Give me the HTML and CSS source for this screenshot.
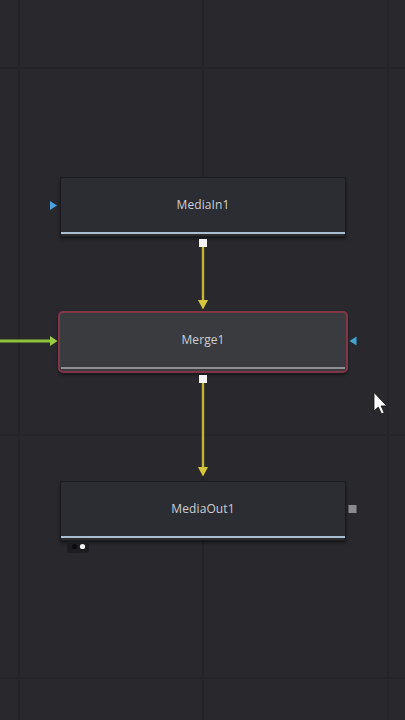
FILE: index.html
```html
<!DOCTYPE html>
<html>
<head>
<meta charset="utf-8">
<link rel="stylesheet" href="styles.css">
</head>
<body>
<div class="canvas">
  <div class="grid-v g1"></div>
  <div class="grid-v g2"></div>
  <div class="grid-v g3"></div>
  <div class="grid-h h1"></div>
  <div class="grid-h h2"></div>
  <div class="grid-h h3"></div>

  <div class="node node-in"><span class="label">MediaIn1</span></div>
  <div class="node node-merge"><span class="label">Merge1</span></div>
  <div class="node node-out"><span class="label">MediaOut1</span></div>

  <svg class="wires" width="405" height="720" viewBox="0 0 405 720">
    <!-- MediaIn1 input -->
    <polygon points="50,201 50,210 57,205.5" fill="#4aa3da"/>
    <!-- MediaIn1 output -> Merge -->
    <line x1="203" y1="247" x2="203" y2="301" stroke="#c4b535" stroke-width="2.4"/>
    <rect x="199" y="239" width="8" height="8" fill="#f4f4f4"/>
    <polygon points="198,300 208,300 203,309.5" fill="#d6c63c"/>
    <!-- green input to Merge -->
    <line x1="0" y1="341" x2="51" y2="341" stroke="#8cc43c" stroke-width="3"/>
    <polygon points="50,336 50,346 57.5,341" fill="#9ccc44"/>
    <!-- Merge right input -->
    <polygon points="356.5,336.5 356.5,345.5 349.5,341" fill="#42a3cf"/>
    <!-- Merge output -> MediaOut -->
    <line x1="203" y1="383" x2="203" y2="468" stroke="#c4b535" stroke-width="2.4"/>
    <rect x="199" y="375" width="8" height="8" fill="#f4f4f4"/>
    <polygon points="198,467 208,467 203,476.5" fill="#d6c63c"/>
    <!-- MediaOut right pin -->
    <rect x="348.5" y="505" width="8" height="8" fill="#8b8b8f"/>
    <!-- view toggles -->
    <rect x="67" y="541" width="22" height="12" rx="2.5" fill="#1d1d21"/>
    <circle cx="74.5" cy="546.5" r="2.6" fill="#0c0c0e"/>
    <circle cx="82.5" cy="546.5" r="2.6" fill="#f2f2f2"/>
    <!-- cursor -->
    <path d="M374,392.5 L374,411 L378.3,407 L381.5,414 L384.2,412.8 L381.1,405.9 L386.8,405.9 Z" fill="#ffffff" stroke="#111" stroke-width="0.8" stroke-linejoin="round"/>
  </svg>
</div>
</body>
</html>
```

FILE: styles.css
```css
html, body {
  margin: 0;
  padding: 0;
  background: #28282d;
}

.canvas {
  position: relative;
  width: 405px;
  height: 720px;
  overflow: hidden;
  background: #28282d;
  font-family: "Open Sans", "Noto Sans", sans-serif;
}

.grid-v {
  position: absolute;
  top: 0;
  width: 2px;
  height: 720px;
  background: #242428;
}
.g1 { left: 18px; }
.g2 { left: 202px; }
.g3 { left: 387px; }

.grid-h {
  position: absolute;
  left: 0;
  width: 405px;
  height: 2px;
  background: #242428;
}
.h1 { top: 67px; }
.h2 { top: 434px; background: #26262a; }
.h3 { top: 677px; }

.node {
  position: absolute;
  box-sizing: border-box;
  display: flex;
  align-items: center;
  justify-content: center;
  color: #cdcdd3;
  font-size: 12px;
  letter-spacing: 0.1px;
}

.node-in,
.node-out {
  left: 60px;
  width: 286px;
  height: 60px;
  background: #2c2d32;
  border: 1px solid #1b1b1f;
  border-radius: 2px;
  box-shadow: 0 2px 3px rgba(0, 0, 0, 0.45);
}
.node-in { top: 177px; }
.node-out { top: 481px; }

.node-in::after,
.node-out::after {
  content: "";
  position: absolute;
  left: 0;
  right: 0;
  bottom: 2px;
  height: 2px;
  background: #a7bdd2;
}

.node-merge {
  left: 58px;
  top: 311px;
  width: 290px;
  height: 62px;
  background: #3a3b3f;
  border: 2px solid #813547;
  border-radius: 5px;
  box-shadow: 0 2px 3px rgba(0, 0, 0, 0.4);
}
.node-merge::after {
  content: "";
  position: absolute;
  left: 1px;
  right: 1px;
  bottom: 2px;
  height: 2px;
  background: #8e8e93;
}

.label {
  position: relative;
  top: -3px;
}

.wires {
  position: absolute;
  left: 0;
  top: 0;
}
```
